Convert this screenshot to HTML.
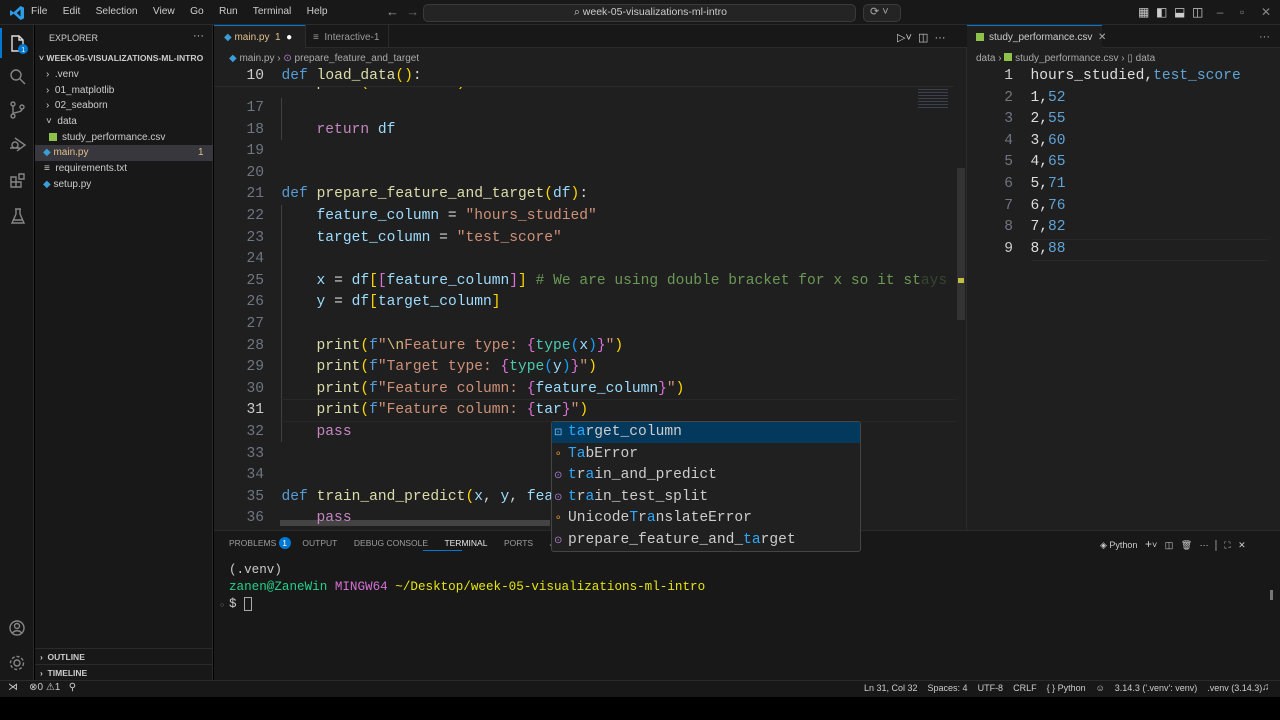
<!DOCTYPE html>
<html><head><meta charset="utf-8"><style>
*{margin:0;padding:0;box-sizing:border-box}
body{width:1280px;height:720px;background:#000;position:relative;overflow:hidden;font-family:"Liberation Sans",sans-serif;color:#ccc}
.a{position:absolute}
.ui{font-size:11px;white-space:nowrap}
.mono{font-family:"Liberation Mono",monospace;font-size:14.6px;white-space:pre;line-height:21px}
.ln{color:#6e7681;text-align:right;width:50px}
.k{color:#569cd6}.f{color:#dcdcaa}.p{color:#c586c0}.v{color:#9cdcfe}.s{color:#ce9178}.c{color:#6a9955}.y{color:#ffd700}.m{color:#da70d6}.b{color:#179fff}.t{color:#4ec9b0}.w{color:#d4d4d4}.h{color:#2aaaff}
.ic{stroke:#868686;fill:none;stroke-width:1.4}
.ac{font-family:"Liberation Mono",monospace;font-size:14.6px;white-space:normal}
.row{height:21.6px;line-height:21.6px;position:relative;padding-left:16px;white-space:pre}
.row i{position:absolute;left:2px;top:0;font-style:normal;font-size:10px;font-family:"Liberation Sans",sans-serif}
</style></head><body>
<!-- title bar -->
<div class="a" style="left:0;top:0;width:1280px;height:25px;background:#181818;border-bottom:1px solid #2b2b2b"></div>
<svg class="a" style="left:9px;top:5px" width="16" height="16" viewBox="0 0 16 16"><path d="M11.5 1 L15 2.6 V13.4 L11.5 15 L4.5 8.6 L1.8 10.7 L1 10.2 V5.8 L1.8 5.3 L4.5 7.4 Z M11.5 4.5 L7.8 8 L11.5 11.5Z" fill="#2d9ce6"/></svg>
<div class="a ui" style="left:31px;top:6px;color:#ccc;font-size:10.2px;word-spacing:1px">File&nbsp;&nbsp;&nbsp; Edit&nbsp;&nbsp;&nbsp; Selection&nbsp;&nbsp;&nbsp; View&nbsp;&nbsp;&nbsp; Go&nbsp;&nbsp;&nbsp; Run&nbsp;&nbsp;&nbsp; Terminal&nbsp;&nbsp;&nbsp; Help</div>
<div class="a ui" style="left:386px;top:4px;font-size:13px;color:#999">←&nbsp;&nbsp;<span style="color:#666">→</span></div>
<div class="a" style="left:423px;top:4px;width:433px;height:18px;background:#242424;border:1px solid #3a3a3a;border-radius:5px"></div>
<div class="a ui" style="left:574px;top:6px;font-size:10.5px;color:#ccc">⌕ week-05-visualizations-ml-intro</div>
<div class="a" style="left:863px;top:4px;width:38px;height:18px;background:#242424;border:1px solid #3a3a3a;border-radius:5px"></div>
<div class="a ui" style="left:870px;top:5px;color:#aaa">⟳ ˅</div>
<div class="a ui" style="left:1138px;top:5px;color:#ccc;font-size:12px">▦&nbsp;&nbsp;◧&nbsp;&nbsp;⬓&nbsp;&nbsp;◫&nbsp;&nbsp;&nbsp;&nbsp;<span style="color:#888">–&nbsp;&nbsp;&nbsp;&nbsp;&nbsp;▫&nbsp;&nbsp;&nbsp;&nbsp;&nbsp;✕</span></div>

<!-- activity bar -->
<div class="a" style="left:0;top:25px;width:34px;height:655px;background:#181818;border-right:1px solid #2b2b2b"></div>
<div class="a" style="left:0;top:28px;width:2px;height:30px;background:#0078d4"></div>
<svg class="a" style="left:8px;top:33px" width="20" height="22"><path class="ic" style="stroke:#ddd" d="M4 3h7l4 4v11H4z M11 3v4h4"/><circle cx="15" cy="16" r="5" fill="#0078d4"/><text x="13.2" y="19" font-size="7" fill="#fff" font-family="Liberation Sans">1</text></svg>
<svg class="a" style="left:8px;top:67px" width="20" height="20"><circle class="ic" cx="8" cy="8" r="5"/><path class="ic" d="M12 12l5 5"/></svg>
<svg class="a" style="left:8px;top:100px" width="20" height="20"><circle class="ic" cx="5" cy="4" r="2"/><circle class="ic" cx="5" cy="16" r="2"/><circle class="ic" cx="14" cy="7" r="2"/><path class="ic" d="M5 6v8 M14 9c0 4-9 3-9 5"/></svg>
<svg class="a" style="left:8px;top:135px" width="20" height="20"><path class="ic" d="M7 3l10 7-8 6 M4 10a3 3 0 1 0 6 0a3 3 0 1 0 -6 0 M2 13h10"/></svg>
<svg class="a" style="left:8px;top:171px" width="20" height="20"><path class="ic" d="M3 6h5v5H3z M3 11h5v5H3z M8 11h5v5H8z M11 3h5v5h-5z"/></svg>
<svg class="a" style="left:8px;top:206px" width="20" height="20"><path class="ic" d="M7 3h6 M8 3v5l-4 9h12l-4-9V3 M5 14h10"/></svg>
<svg class="a" style="left:7px;top:618px" width="20" height="20"><circle class="ic" cx="10" cy="10" r="7"/><circle class="ic" cx="10" cy="8" r="2.5"/><path class="ic" d="M5.5 15c2-3 7-3 9 0"/></svg>
<svg class="a" style="left:7px;top:653px" width="20" height="20"><circle class="ic" cx="10" cy="10" r="3"/><circle class="ic" cx="10" cy="10" r="6.5" stroke-dasharray="3 2"/></svg>

<!-- sidebar -->
<div class="a" style="left:35px;top:25px;width:178px;height:655px;background:#181818;border-right:1px solid #2b2b2b"></div>
<div class="a ui" style="left:49px;top:33px;font-size:9px;color:#ccc">EXPLORER</div>
<div class="a ui" style="left:193px;top:30px;color:#ccc">···</div>
<div class="a ui" style="left:39px;top:53px;font-size:8.6px;font-weight:bold;color:#ccc">˅ WEEK-05-VISUALIZATIONS-ML-INTRO</div>
<div class="a ui" style="left:46px;top:69px;font-size:10px">›&nbsp; .venv</div>
<div class="a ui" style="left:46px;top:85px;font-size:10px">›&nbsp; 01_matplotlib</div>
<div class="a ui" style="left:46px;top:100px;font-size:10px">›&nbsp; 02_seaborn</div>
<div class="a ui" style="left:46px;top:116px;font-size:10px">˅&nbsp; data</div>
<div class="a" style="left:49px;top:133px;width:8px;height:8px;background:#8dc149"></div>
<div class="a ui" style="left:62px;top:132px;font-size:10px">study_performance.csv</div>
<div class="a" style="left:35px;top:145px;width:178px;height:16px;background:#37373d"></div>
<div class="a ui" style="left:43px;top:147px;font-size:10px;color:#3c9cd6">◆ <span style="color:#e2c08d">main.py</span></div>
<div class="a ui" style="left:198px;top:147px;font-size:10px;color:#e2c08d">1</div>
<div class="a ui" style="left:44px;top:163px;font-size:10px">≡&nbsp; requirements.txt</div>
<div class="a ui" style="left:43px;top:179px;font-size:10px"><span style="color:#3c9cd6">◆</span> setup.py</div>
<div class="a" style="left:35px;top:648px;width:178px;height:1px;background:#2b2b2b"></div>
<div class="a ui" style="left:40px;top:652px;font-size:8.5px;font-weight:bold">›&nbsp; OUTLINE</div>
<div class="a" style="left:35px;top:664px;width:178px;height:1px;background:#2b2b2b"></div>
<div class="a ui" style="left:40px;top:668px;font-size:8.5px;font-weight:bold">›&nbsp; TIMELINE</div>

<!-- editor group 1 -->
<div class="a" style="left:214px;top:25px;width:752px;height:505px;background:#1f1f1f"></div>
<div class="a" style="left:214px;top:25px;width:752px;height:23px;background:#181818;border-bottom:1px solid #2b2b2b"></div>
<div class="a" style="left:214px;top:25px;width:91px;height:24px;background:#1f1f1f;border-top:1px solid #0078d4"></div>
<div class="a ui" style="left:224px;top:32px;font-size:10px;color:#3c9cd6">◆ <span style="color:#e2c08d">main.py&nbsp; 1</span> <span style="color:#fff">&nbsp;●</span></div>
<div class="a" style="left:305px;top:25px;width:1px;height:23px;background:#2b2b2b"></div>
<div class="a" style="left:388px;top:25px;width:1px;height:23px;background:#2b2b2b"></div>
<div class="a ui" style="left:313px;top:32px;font-size:10px;color:#999">≡&nbsp; Interactive-1</div>
<div class="a ui" style="left:897px;top:31px;color:#ccc">▷˅&nbsp; ◫&nbsp; ···</div>
<div class="a ui" style="left:229px;top:53px;font-size:10px;color:#aaa"><span style="color:#3c9cd6">◆</span> main.py › <span style="color:#b180d7">⊙</span> prepare_feature_and_target</div>
<!-- minimap -->
<div class="a" style="left:918px;top:66px;width:30px;height:44px;background:repeating-linear-gradient(#1f1f1f 0 2px,#55607a 2px 3px);opacity:.5"></div>
<div class="a" style="left:957px;top:168px;width:8px;height:152px;background:#333"></div>
<div class="a" style="left:958px;top:278px;width:6px;height:5px;background:#c0c040"></div>
<div class="a" style="left:280px;top:520px;width:270px;height:6px;background:#444"></div>
<!-- code -->
<div class="a" style="left:281px;top:98px;width:1px;height:42px;background:#404040"></div>
<div class="a" style="left:281px;top:205px;width:1px;height:237px;background:#404040"></div>
<div class="a mono" style="left:214px;top:77px;width:740px;height:21px;overflow:hidden"><div style="position:absolute;top:-4px;left:0"><span class="ln" style="display:inline-block">16</span>      <span class="f">print</span><span class="y">(</span><span class="v">df.columns</span><span class="y">)</span></div></div>
<div class="a mono" style="left:214px;top:66px;width:740px;height:20px;background:#1f1f1f;overflow:hidden"><span class="ln" style="display:inline-block;color:#ccc">10</span>  <span class="k">def</span> <span class="f">load_data</span><span class="y">()</span><span class="w">:</span></div>
<div class="a mono" style="left:214px;top:86px;width:740px;height:1px;background:#2a2a2a"></div>
<div class="a mono" style="left:214px;top:98px;width:740px;line-height:21.6px"><span class="ln" style="display:inline-block">17</span>
<span class="ln" style="display:inline-block">18</span>      <span class="p">return</span> <span class="v">df</span>
<span class="ln" style="display:inline-block">19</span>
<span class="ln" style="display:inline-block">20</span>
<span class="ln" style="display:inline-block">21</span>  <span class="k">def</span> <span class="f">prepare_feature_and_target</span><span class="y">(</span><span class="v">df</span><span class="y">)</span><span class="w">:</span>
<span class="ln" style="display:inline-block">22</span>      <span class="v">feature_column</span> <span class="w">=</span> <span class="s">"hours_studied"</span>
<span class="ln" style="display:inline-block">23</span>      <span class="v">target_column</span> <span class="w">=</span> <span class="s">"test_score"</span>
<span class="ln" style="display:inline-block">24</span>
<span class="ln" style="display:inline-block">25</span>      <span class="v">x</span> <span class="w">=</span> <span class="v">df</span><span class="y">[</span><span class="m">[</span><span class="v">feature_column</span><span class="m">]</span><span class="y">]</span> <span class="c"># We are using double bracket for x so it st</span><span class="c" style="opacity:.3">ays</span>
<span class="ln" style="display:inline-block">26</span>      <span class="v">y</span> <span class="w">=</span> <span class="v">df</span><span class="y">[</span><span class="v">target_column</span><span class="y">]</span>
<span class="ln" style="display:inline-block">27</span>
<span class="ln" style="display:inline-block">28</span>      <span class="f">print</span><span class="y">(</span><span class="k">f</span><span class="s">"</span><span class="y" style="color:#d7ba7d">\n</span><span class="s">Feature type: </span><span class="m">{</span><span class="t">type</span><span class="b">(</span><span class="v">x</span><span class="b">)</span><span class="m">}</span><span class="s">"</span><span class="y">)</span>
<span class="ln" style="display:inline-block">29</span>      <span class="f">print</span><span class="y">(</span><span class="k">f</span><span class="s">"Target type: </span><span class="m">{</span><span class="t">type</span><span class="b">(</span><span class="v">y</span><span class="b">)</span><span class="m">}</span><span class="s">"</span><span class="y">)</span>
<span class="ln" style="display:inline-block">30</span>      <span class="f">print</span><span class="y">(</span><span class="k">f</span><span class="s">"Feature column: </span><span class="m">{</span><span class="v">feature_column</span><span class="m">}</span><span class="s">"</span><span class="y">)</span>
<span class="ln" style="display:inline-block;color:#ccc">31</span>      <span class="f">print</span><span class="y">(</span><span class="k">f</span><span class="s">"Feature column: </span><span class="m">{</span><span class="v">tar</span><span class="m">}</span><span class="s">"</span><span class="y">)</span>
<span class="ln" style="display:inline-block">32</span>      <span class="p">pass</span>
<span class="ln" style="display:inline-block">33</span>
<span class="ln" style="display:inline-block">34</span>
<span class="ln" style="display:inline-block">35</span>  <span class="k">def</span> <span class="f">train_and_predict</span><span class="y">(</span><span class="v">x</span><span class="w">,</span> <span class="v">y</span><span class="w">,</span> <span class="v">feature_column</span><span class="y">)</span>
<span class="ln" style="display:inline-block">36</span>      <span class="p">pass</span></div>
<div class="a" style="left:280px;top:399px;width:676px;height:1px;background:#282828"></div>
<div class="a" style="left:280px;top:421px;width:676px;height:1px;background:#282828"></div>

<!-- editor group 2 -->
<div class="a" style="left:966px;top:25px;width:314px;height:505px;background:#1f1f1f;border-left:1px solid #2b2b2b"></div>
<div class="a" style="left:966px;top:25px;width:314px;height:23px;background:#181818;border-bottom:1px solid #2b2b2b"></div>
<div class="a" style="left:967px;top:25px;width:135px;height:24px;background:#1f1f1f;border-top:1px solid #0078d4"></div>
<div class="a" style="left:976px;top:33px;width:8px;height:8px;background:#8dc149"></div>
<div class="a ui" style="left:989px;top:32px;font-size:10px;color:#ccc">study_performance.csv&nbsp; <span style="color:#aaa">✕</span></div>
<div class="a ui" style="left:1259px;top:31px;color:#aaa">···</div>
<div class="a ui" style="left:976px;top:53px;font-size:10px;color:#aaa">data › <span style="display:inline-block;width:8px;height:8px;background:#8dc149"></span> study_performance.csv › ▯ data</div>
<div class="a mono" style="left:966px;top:66px;line-height:21.6px;color:#ddd"><span class="ln" style="display:inline-block;width:47px;color:#ccc">1</span>  hours_studied,<span style="color:#5fa3d6">test_score</span>
<span class="ln" style="display:inline-block;width:47px">2</span>  1,<span style="color:#5fa3d6">52</span>
<span class="ln" style="display:inline-block;width:47px">3</span>  2,<span style="color:#5fa3d6">55</span>
<span class="ln" style="display:inline-block;width:47px">4</span>  3,<span style="color:#5fa3d6">60</span>
<span class="ln" style="display:inline-block;width:47px">5</span>  4,<span style="color:#5fa3d6">65</span>
<span class="ln" style="display:inline-block;width:47px">6</span>  5,<span style="color:#5fa3d6">71</span>
<span class="ln" style="display:inline-block;width:47px">7</span>  6,<span style="color:#5fa3d6">76</span>
<span class="ln" style="display:inline-block;width:47px">8</span>  7,<span style="color:#5fa3d6">82</span>
<span class="ln" style="display:inline-block;width:47px;color:#ccc">9</span>  8,<span style="color:#5fa3d6">88</span></div>
<div class="a" style="left:1032px;top:239px;width:236px;height:1px;background:#282828"></div>
<div class="a" style="left:1032px;top:260px;width:236px;height:1px;background:#282828"></div>

<!-- panel -->
<div class="a" style="left:214px;top:530px;width:1066px;height:150px;background:#181818;border-top:1px solid #2b2b2b"></div>
<div class="a ui" style="left:229px;top:537px;font-size:8.5px;color:#9d9d9d">PROBLEMS <span style="display:inline-block;width:12px;height:12px;border-radius:6px;background:#0078d4;color:#fff;text-align:center;line-height:12px">1</span>&nbsp;&nbsp;&nbsp;&nbsp; OUTPUT&nbsp;&nbsp;&nbsp;&nbsp;&nbsp;&nbsp; DEBUG CONSOLE&nbsp;&nbsp;&nbsp;&nbsp;&nbsp;&nbsp; <span style="color:#e7e7e7">TERMINAL</span>&nbsp;&nbsp;&nbsp;&nbsp;&nbsp;&nbsp; PORTS&nbsp;&nbsp;&nbsp;&nbsp;&nbsp;&nbsp; JUPYTER</div>
<div class="a" style="left:423px;top:550px;width:39px;height:1px;background:#0078d4"></div>
<div class="a ui" style="left:1100px;top:537px;font-size:9px;color:#ccc">◈ Python&nbsp;&nbsp; <span style="font-size:12px">+</span>˅&nbsp;&nbsp; ◫&nbsp;&nbsp; 🗑&nbsp;&nbsp; ··· &nbsp;│&nbsp; ⛶&nbsp;&nbsp; ✕</div>
<div class="a mono" style="left:229px;top:562px;font-size:12.6px;line-height:17px;color:#ccc">(.venv)
<span style="color:#23d18b">zanen@ZaneWin</span> <span style="color:#d670d6">MINGW64</span> <span style="color:#e5e510">~/Desktop/week-05-visualizations-ml-intro</span>
$ <span style="display:inline-block;width:8px;height:14px;border:1px solid #aaa;vertical-align:middle"></span></div>
<div class="a ui" style="left:220px;top:602px;font-size:7px;color:#888">○</div>
<div class="a" style="left:1270px;top:590px;width:3px;height:10px;background:#777"></div>

<!-- autocomplete (on top) -->
<div class="a" style="left:551px;top:421px;width:310px;height:131px;background:#202020;border:1px solid #454545;border-radius:3px"></div>
<div class="a" style="left:552px;top:422px;width:308px;height:21px;background:#04395e"></div>
<div class="a ac" style="left:552px;top:422px;width:300px;color:#ccc"><div class="row"><i style="color:#75beff">⊡</i><span class="h">ta</span>rget_column</div><div class="row"><i style="color:#ee9d28">⚬</i><span class="h">Ta</span>bError</div><div class="row"><i style="color:#b180d7">⊙</i><span class="h">t</span>r<span class="h">a</span>in_and_predict</div><div class="row"><i style="color:#b180d7">⊙</i><span class="h">t</span>r<span class="h">a</span>in_test_split</div><div class="row"><i style="color:#ee9d28">⚬</i>Unicode<span class="h">T</span>r<span class="h">a</span>nslateError</div><div class="row"><i style="color:#b180d7">⊙</i>prepare_feature_and_<span class="h">ta</span>rget</div></div>

<!-- status bar -->
<div class="a" style="left:0;top:680px;width:1280px;height:17px;background:#181818;border-top:1px solid #2b2b2b"></div>
<div class="a ui" style="left:8px;top:682px;font-size:10px;color:#ccc">⋊&nbsp;&nbsp;&nbsp; ⊗0 ⚠1&nbsp;&nbsp; ⚲</div>
<div class="a ui" style="left:864px;top:683px;font-size:9px;color:#ccc">Ln 31, Col 32&nbsp;&nbsp;&nbsp; Spaces: 4&nbsp;&nbsp;&nbsp; UTF-8&nbsp;&nbsp;&nbsp; CRLF&nbsp;&nbsp;&nbsp; { } Python&nbsp;&nbsp;&nbsp; ☺&nbsp;&nbsp;&nbsp; 3.14.3 ('.venv': venv)&nbsp;&nbsp;&nbsp; .venv (3.14.3)</div>
<div class="a ui" style="left:1262px;top:682px;font-size:10px;color:#ccc">♫</div>
</body></html>
